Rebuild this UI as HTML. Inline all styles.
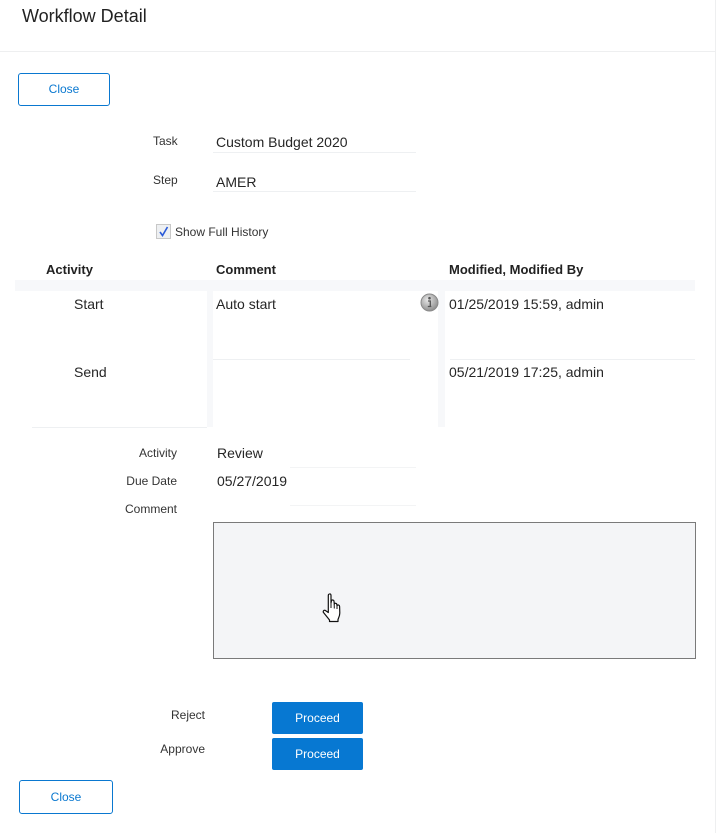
<!DOCTYPE html>
<html><head><meta charset="utf-8"><style>
body{margin:0;width:718px;height:833px;background:#fff;position:relative;overflow:hidden;font-family:"Liberation Sans",sans-serif;color:#222}
.a{position:absolute;white-space:nowrap}
.l{font-size:12px;line-height:14px;color:#333}
.v{font-size:14px;line-height:16px;color:#262626}
.h{font-size:13px;line-height:16px;font-weight:bold;color:#222}
.ln{position:absolute;height:1px;background:#eef0f2}
.btn{position:absolute;border:1px solid #0a78d0;border-radius:3px;color:#0a78d0;font-size:12px;text-align:center;box-sizing:border-box;background:#fff}
.pb{position:absolute;background:#0778d2;color:#fff;font-size:12px;text-align:center;border-radius:2px;width:91px;height:32px;line-height:32px}
.r{text-align:right}
</style></head><body>
<div class="a" style="left:22px;top:5px;font-size:18px;line-height:22px;color:#222">Workflow Detail</div>
<div class="ln" style="left:0;top:51px;width:715px;background:#eeeff0"></div>
<div style="position:absolute;left:715px;top:0;width:1px;height:833px;background:#eeeff0"></div>
<div class="btn" style="left:18px;top:73px;width:92px;height:33px;line-height:31px">Close</div>

<div class="a l" style="left:153px;top:134px">Task</div>
<div class="a v" style="left:216px;top:134px">Custom Budget 2020</div>
<div class="ln" style="left:213px;top:152px;width:203px"></div>
<div class="a l" style="left:153px;top:173px">Step</div>
<div class="a v" style="left:216px;top:174px">AMER</div>
<div class="ln" style="left:213px;top:191px;width:203px"></div>

<div style="position:absolute;left:156px;top:224px;width:13px;height:13px;border:1px solid #c8c8c8;background:#eef0f2"></div>
<svg class="a" style="left:157px;top:225px" width="13" height="13"><path d="M3 7 L5.5 10.5 L10.5 2" stroke="#2a5ad8" stroke-width="1.6" fill="none"/></svg>
<div class="a l" style="left:175px;top:225px">Show Full History</div>

<div class="a h" style="left:46px;top:262px">Activity</div>
<div class="a h" style="left:216px;top:262px">Comment</div>
<div class="a h" style="left:449px;top:262px">Modified, Modified By</div>
<div style="position:absolute;left:15px;top:280px;width:680px;height:11px;background:#f7f8fa"></div>
<div style="position:absolute;left:207px;top:280px;width:6px;height:147px;background:#f7f8fa"></div>
<div style="position:absolute;left:438px;top:280px;width:7px;height:147px;background:#f7f8fa"></div>

<div class="a v" style="left:74px;top:296px">Start</div>
<div class="a v" style="left:216px;top:296px">Auto start</div>
<svg class="a" style="left:420px;top:293px" width="19" height="19"><defs><radialGradient id="g" cx="40%" cy="35%" r="70%"><stop offset="0" stop-color="#e8e8e8"/><stop offset="1" stop-color="#8a8a8a"/></radialGradient></defs><circle cx="9.5" cy="9.5" r="8.5" fill="url(#g)" stroke="#8a8a8a"/><circle cx="9.5" cy="5.2" r="1.3" fill="#555"/><path d="M8 8 L10.3 8 L10.3 13.5 L11.3 13.5 M7.8 13.5 L11.3 13.5" stroke="#555" stroke-width="1.3" fill="none"/></svg>
<div class="a v" style="left:449px;top:296px">01/25/2019 15:59, admin</div>
<div class="ln" style="left:213px;top:359px;width:197px"></div>
<div class="ln" style="left:450px;top:359px;width:245px"></div>
<div class="a v" style="left:74px;top:364px">Send</div>
<div class="a v" style="left:449px;top:364px">05/21/2019 17:25, admin</div>
<div class="ln" style="left:32px;top:427px;width:175px"></div>

<div class="a l r" style="left:60px;width:117px;top:446px">Activity</div>
<div class="a v" style="left:217px;top:445px">Review</div>
<div class="ln" style="left:290px;top:467px;width:126px;background:#f3f4f5"></div>
<div class="a l r" style="left:60px;width:117px;top:474px">Due Date</div>
<div class="a v" style="left:217px;top:473px">05/27/2019</div>
<div class="a l r" style="left:60px;width:117px;top:502px">Comment</div>
<div class="ln" style="left:290px;top:505px;width:126px;background:#f3f4f5"></div>

<div style="position:absolute;left:213px;top:522px;width:481px;height:135px;background:#f4f5f7;border:1px solid #7a7a7a"></div>
<svg class="a" style="left:322px;top:593px" width="24" height="30"><path d="M6.5 1.5 C7.5 0.5 9 0.8 9 2.5 L9 10 L9.5 7.5 C10.5 6.5 12 7 12 8.3 L12.3 11 C13 9.8 14.8 10.2 14.8 11.5 L15 12.5 C16 11.5 17.6 12 17.6 13.5 L17.8 20 C17.8 23 16.5 25 16 26.5 L16 28.5 L7.5 28.5 L7.5 27 C6 25 3.5 22 1.5 19.5 C0.8 18.5 1.5 17 3 17.3 L6.3 19.5 L6.3 2.5 Z" fill="#fff" stroke="#111" stroke-width="1.2" stroke-linejoin="round"/><path d="M9 10 L9 15 M12.2 11 L12.3 15.5 M15 12.5 L15 16" stroke="#111" stroke-width="1"/></svg>

<div class="a l r" style="left:100px;width:105px;top:708px">Reject</div>
<div class="pb" style="left:272px;top:702px">Proceed</div>
<div class="a l r" style="left:100px;width:105px;top:742px">Approve</div>
<div class="pb" style="left:272px;top:738px">Proceed</div>
<div class="btn" style="left:19px;top:780px;width:94px;height:34px;line-height:32px">Close</div>
</body></html>
